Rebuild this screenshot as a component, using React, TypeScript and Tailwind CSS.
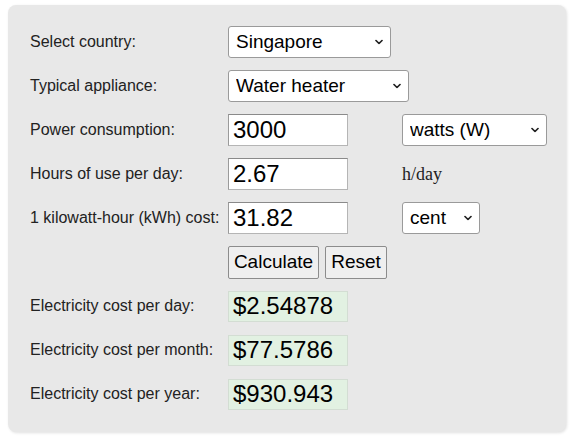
import type { ReactNode } from 'react';

function Chevron() {
  return (
    <svg
      className="pointer-events-none absolute right-[8px] top-1/2 -translate-y-1/2"
      width="8"
      height="5"
      viewBox="0 0 8 5"
      fill="none"
    >
      <path d="M1 1l3 3 3-3" stroke="#222" strokeWidth="1.7" strokeLinecap="round" strokeLinejoin="round" />
    </svg>
  );
}

function Select({ value, width, options }: { value: string; width: string; options: string[] }) {
  return (
    <div className={`relative ${width}`}>
      <select
        defaultValue={value}
        className="h-[32px] w-full appearance-none rounded-[3px] border border-[#9a9a9a] bg-white pl-[7px] pr-6 text-[19px] text-black outline-none"
      >
        {options.map((o) => (
          <option key={o}>{o}</option>
        ))}
      </select>
      <Chevron />
    </div>
  );
}

function TextInput({ value }: { value: string }) {
  return (
    <input
      defaultValue={value}
      className="h-[32px] w-[120px] border border-[#b5b5b5] border-t-[#8a8a8a] border-l-[#9a9a9a] bg-white pl-[4px] text-[24px] text-black outline-none"
    />
  );
}

function Result({ value }: { value: string }) {
  return (
    <div className="flex h-[31px] w-[120px] items-center border border-[#d3ddd3] bg-[#e2f1e2] pl-[4px] text-[24px] text-black">
      {value}
    </div>
  );
}

function Row({ label, children, extra }: { label: string; children?: ReactNode; extra?: ReactNode }) {
  return (
    <div className="flex h-[44px] items-center">
      <div className="w-[198px] shrink-0 text-[16px] text-[#222]">{label}</div>
      <div className="w-[174px] shrink-0">{children}</div>
      {extra}
    </div>
  );
}

export default function App() {
  return (
    <div className="min-h-screen bg-white pl-[8px] pt-[5px]" style={{ fontFamily: '"Liberation Sans", Arial, sans-serif' }}>
      <div className="h-[427px] w-[558px] rounded-[8px] bg-[#e8e8e8] pl-[22px] pt-[15px] shadow-[1px_1px_3px_rgba(0,0,0,0.12)]">
        <Row label="Select country:">
          <Select value="Singapore" width="w-[163px]" options={['Singapore', 'United States', 'United Kingdom']} />
        </Row>
        <Row label="Typical appliance:">
          <Select value="Water heater" width="w-[181px]" options={['Water heater', 'Refrigerator', 'Air conditioner']} />
        </Row>
        <Row
          label="Power consumption:"
          extra={<Select value="watts (W)" width="w-[145px]" options={['watts (W)', 'kilowatts (kW)']} />}
        >
          <TextInput value="3000" />
        </Row>
        <Row
          label="Hours of use per day:"
          extra={<span className="text-[18px] text-[#222]" style={{ fontFamily: '"Liberation Serif", "Times New Roman", serif' }}>h/day</span>}
        >
          <TextInput value="2.67" />
        </Row>
        <Row
          label="1 kilowatt-hour (kWh) cost:"
          extra={<Select value="cent" width="w-[78px]" options={['cent', 'dollar']} />}
        >
          <TextInput value="31.82" />
        </Row>
        <Row label="">
          <div className="flex gap-[6px]">
            <button className="h-[33px] w-[91px] rounded-[2px] border border-[#8c8c8c] bg-[#efefef] text-[19px] text-black">
              Calculate
            </button>
            <button className="h-[33px] w-[62px] rounded-[2px] border border-[#8c8c8c] bg-[#efefef] text-[19px] text-black">
              Reset
            </button>
          </div>
        </Row>
        <Row label="Electricity cost per day:">
          <Result value="$2.54878" />
        </Row>
        <Row label="Electricity cost per month:">
          <Result value="$77.5786" />
        </Row>
        <Row label="Electricity cost per year:">
          <Result value="$930.943" />
        </Row>
      </div>
    </div>
  );
}
